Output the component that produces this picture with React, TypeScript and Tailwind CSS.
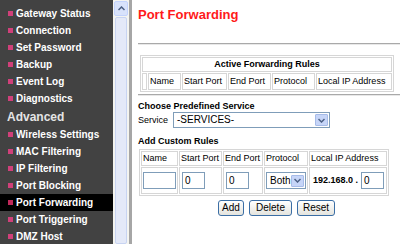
import React from 'react';

const menuTop = ['Gateway Status', 'Connection', 'Set Password', 'Backup', 'Event Log', 'Diagnostics'];
const menuAdv = ['Wireless Settings', 'MAC Filtering', 'IP Filtering', 'Port Blocking', 'Port Forwarding', 'Port Triggering', 'DMZ Host'];

const MenuItem: React.FC<{ label: string; active?: boolean }> = ({ label, active }) => (
  <div className={`h-[17px] flex items-center pl-[8px] ${active ? 'bg-black' : ''}`}>
    <span className={`w-[5px] h-[5px] mr-[3px] ${active ? 'bg-[#c0285a]' : 'bg-[#d0407a]'}`}></span>
    <span className="text-[10px] font-bold text-white leading-none">{label}</span>
  </div>
);

const cell = 'border border-[#d6d6d6] px-[1px] text-[9px] leading-[11px] text-black font-normal whitespace-nowrap';

const Arrow: React.FC = () => (
  <div className="w-[13px] h-[12px] mr-[1px] bg-[#c6d5f8] border border-[#a6bbe8] rounded-[1px] flex items-center justify-center shrink-0">
    <svg width="7" height="5" viewBox="0 0 7 5">
      <path d="M0.5 1 L3.5 4 L6.5 1" fill="none" stroke="#4d6185" strokeWidth="1.5" />
    </svg>
  </div>
);

const App: React.FC = () => {
  return (
    <div className="w-[400px] h-[244px] overflow-hidden flex bg-white" style={{ fontFamily: '"Liberation Sans", Arial, sans-serif' }}>
      {/* left nav */}
      <div className="w-[113px] h-full bg-[#424242] pt-[5px] shrink-0">
        {menuTop.map((m) => (
          <MenuItem key={m} label={m} />
        ))}
        <div className="h-[19px] flex items-center pl-[7px] text-[12px] font-bold text-[#e4e4e4]">Advanced</div>
        {menuAdv.map((m) => (
          <MenuItem key={m} label={m} active={m === 'Port Forwarding'} />
        ))}
      </div>

      {/* scrollbar */}
      <div className="w-[16px] h-full bg-[#f4f4f0] flex flex-col shrink-0">
        <div className="h-[15px] mx-[1px] mt-[1px] border border-[#c3d3fd] bg-[#d8e2fb] rounded-[2px] flex items-center justify-center">
          <svg width="7" height="5" viewBox="0 0 7 5">
            <path d="M0.5 4 L3.5 1 L6.5 4" fill="none" stroke="#4d6185" strokeWidth="1.5" />
          </svg>
        </div>
        <div className="flex-1 mx-[2px] mt-[1px] border border-[#c8d4f2] bg-[#e4e9f8] rounded-[2px]"></div>
      </div>
      <div className="w-[3px] h-full bg-[#a6a6a6] shrink-0"></div>

      {/* content */}
      <div className="flex-1 pl-[6px] pt-[7px] text-black">
        <div className="text-[13px] font-bold text-[#ff1a1a] leading-[15px]">Port Forwarding</div>

        <div className="mt-[21px] h-[2px] border-t border-[#a9a9a9] border-b border-b-[#e8e8e8]"></div>

        <table className="mt-[10px] ml-[2px] w-[254px] border border-[#d6d6d6] border-separate border-spacing-[1px]">
          <tbody>
            <tr>
              <td colSpan={6} className={`${cell} text-center h-[15px]`}>
                <span className="font-bold">Active Forwarding Rules</span>
              </td>
            </tr>
            <tr className="h-[17px]">
              <td className={`${cell} w-[5px] px-0`}></td>
              <td className={`${cell} w-[33px]`}>Name</td>
              <td className={`${cell} w-[45px]`}>Start Port</td>
              <td className={`${cell} w-[43px]`}>End Port</td>
              <td className={`${cell} w-[43px]`}>Protocol</td>
              <td className={`${cell}`}>Local IP Address</td>
            </tr>
          </tbody>
        </table>

        <div className="mt-[2px] h-[2px] border-t border-[#a9a9a9] border-b border-b-[#e8e8e8]"></div>

        <div className="mt-[5px] text-[9px] font-bold leading-[11px]">Choose Predefined Service</div>
        <div className="flex items-center mt-[0px]">
          <span className="text-[9px] leading-[11px] w-[35px]">Service</span>
          <div className="w-[157px] h-[16px] border border-[#7f9db9] flex items-center bg-white">
            <span className="flex-1 text-[10px] leading-none pl-[3px]">-SERVICES-</span>
            <Arrow />
          </div>
        </div>

        <div className="mt-[8px] text-[9px] font-bold leading-[11px]">Add Custom Rules</div>
        <table className="mt-[2px] ml-[1px] w-[250px] border border-[#d6d6d6] border-separate border-spacing-[1px]">
          <tbody>
            <tr className="h-[15px]">
              <td className={`${cell} w-[36px]`}>Name</td>
              <td className={`${cell} w-[43px]`}>Start Port</td>
              <td className={`${cell} w-[40px]`}>End Port</td>
              <td className={`${cell} w-[44px]`}>Protocol</td>
              <td className={`${cell}`}>Local IP Address</td>
            </tr>
            <tr className="h-[27px]">
              <td className={`${cell}`}>
                <div className="w-[33px] h-[17px] border border-[#7f9db9] bg-white"></div>
              </td>
              <td className={`${cell}`}>
                <div className="ml-[1px] w-[23px] h-[17px] border border-[#7f9db9] bg-white text-[10px] leading-[15px] pl-[2px]">0</div>
              </td>
              <td className={`${cell}`}>
                <div className="ml-[1px] w-[23px] h-[17px] border border-[#7f9db9] bg-white text-[10px] leading-[15px] pl-[2px]">0</div>
              </td>
              <td className={`${cell}`}>
                <div className="w-[40px] h-[17px] border border-[#7f9db9] bg-white flex items-center">
                  <span className="flex-1 text-[10px] leading-none pl-[3px]">Both</span>
                  <Arrow />
                </div>
              </td>
              <td className={`${cell}`}>
                <div className="flex items-center pl-[2px]">
                  <span className="text-[9px] font-bold mr-[3px]">192.168.0 .</span>
                  <div className="w-[23px] h-[17px] border border-[#7f9db9] bg-white text-[10px] leading-[15px] pl-[2px]">0</div>
                </div>
              </td>
            </tr>
          </tbody>
        </table>

        <div className="flex gap-[5px] mt-[4px] ml-[80px]">
          {[
            ['Add', 'w-[26px]'],
            ['Delete', 'w-[43px]'],
            ['Reset', 'w-[38px]'],
          ].map(([b, w]) => (
            <button
              key={b}
              className={`${w} h-[16px] border border-[#3b6ea5] rounded-[3px] bg-gradient-to-b from-white to-[#e4e4de] text-[10px] leading-none text-black`}
            >
              {b}
            </button>
          ))}
        </div>
      </div>
    </div>
  );
};

export default App;
